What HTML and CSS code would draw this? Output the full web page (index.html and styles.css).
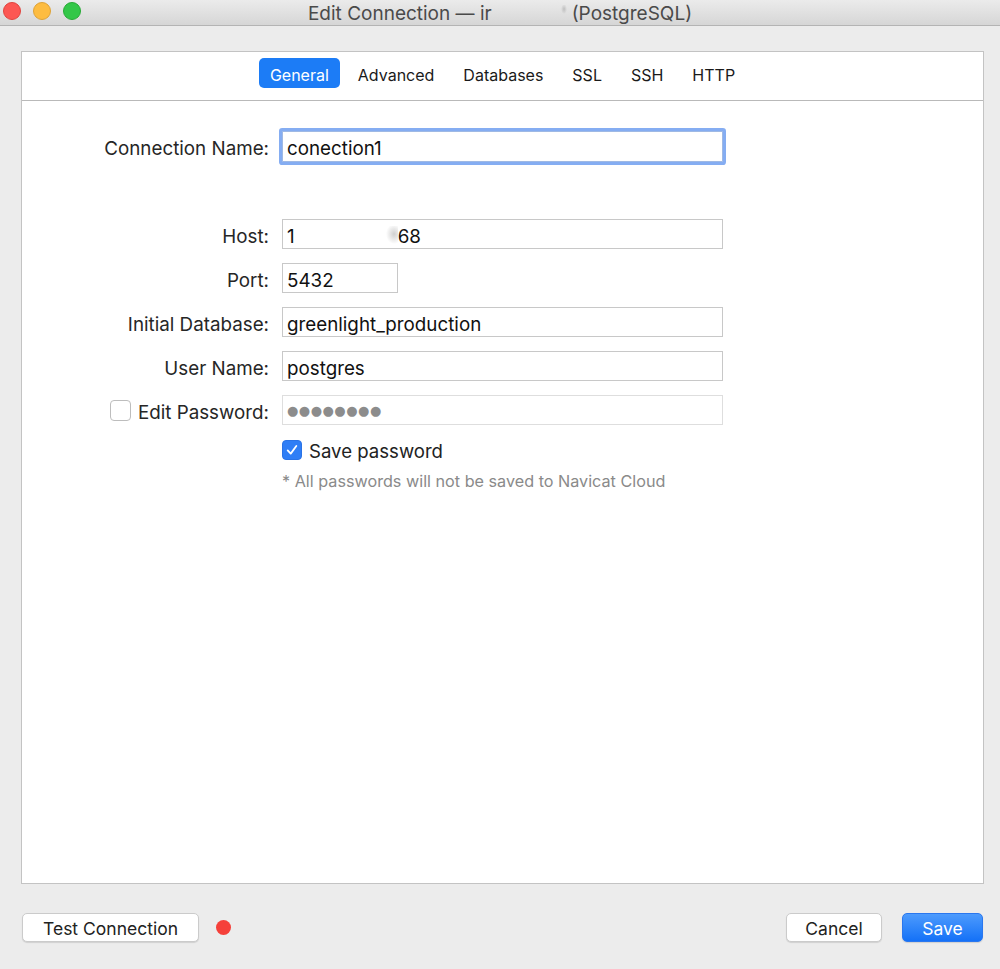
FILE: index.html
```html
<!DOCTYPE html>
<html lang="en">
<head>
<meta charset="utf-8">
<title>Edit Connection</title>
<link rel="stylesheet" href="styles.css">
</head>
<body>
<div class="window">
  <header class="titlebar">
    <div class="lights">
      <span class="light red"></span>
      <span class="light yellow"></span>
      <span class="light green"></span>
    </div>
    <div class="title">Edit Connection — ir<span class="redact-title"></span>(PostgreSQL)</div>
    <div></div>
  </header>

  <main class="content">
    <section class="panel">
      <nav class="tabs">
        <span class="tab active">General</span>
        <span class="tab">Advanced</span>
        <span class="tab">Databases</span>
        <span class="tab">SSL</span>
        <span class="tab">SSH</span>
        <span class="tab">HTTP</span>
      </nav>

      <div class="form">
        <div class="row row-name">
          <label class="label">Connection Name:</label>
          <div class="field focused">conection1</div>
        </div>

        <div class="row row-host">
          <label class="label">Host:</label>
          <div class="field">1<span class="redact-host"></span>68</div>
        </div>

        <div class="row">
          <label class="label">Port:</label>
          <div class="field port">5432</div>
        </div>

        <div class="row">
          <label class="label">Initial Database:</label>
          <div class="field">greenlight_production</div>
        </div>

        <div class="row">
          <label class="label">User Name:</label>
          <div class="field">postgres</div>
        </div>

        <div class="row">
          <label class="label label-check"><span class="checkbox"></span><span class="label-text">Edit Password:</span></label>
          <div class="field disabled"><span class="dots">●●●●●●●●</span></div>
        </div>

        <div class="row row-save">
          <span class="label"></span>
          <div class="check-line">
            <span class="checkbox checked">
              <svg viewBox="0 0 20 20" width="20" height="20"><path d="M5.2 10.4 L8.6 14 L14.8 5.6" fill="none" stroke="#fff" stroke-width="2" stroke-linecap="round" stroke-linejoin="round"/></svg>
            </span>
            <span class="check-text">Save password</span>
          </div>
        </div>

        <div class="row row-note">
          <span class="label"></span>
          <p class="note">* All passwords will not be saved to Navicat Cloud</p>
        </div>
      </div>
    </section>

    <footer class="footer">
      <div class="footer-left">
        <button class="btn">Test Connection</button>
        <span class="status-dot"></span>
      </div>
      <div class="footer-right">
        <button class="btn btn-cancel">Cancel</button>
        <button class="btn primary">Save</button>
      </div>
    </footer>
  </main>
</div>
</body>
</html>
```

FILE: styles.css
```css
* { box-sizing: border-box; }

html, body {
  margin: 0;
  padding: 0;
}

body {
  width: 1000px;
  height: 969px;
  background: #ececec;
  font-family: Inter, "Liberation Sans", Arial, sans-serif;
  color: #222;
  overflow: hidden;
}

.window {
  width: 1000px;
  height: 969px;
  display: flex;
  flex-direction: column;
}

.titlebar {
  height: 26px;
  flex: none;
  display: grid;
  grid-template-columns: 1fr auto 1fr;
  align-items: center;
  background: linear-gradient(#ebebeb, #d6d6d6);
  border-bottom: 1px solid #b4b4b4;
}

.lights {
  display: flex;
  gap: 12px;
  padding-left: 3px;
  align-self: start;
  padding-top: 2px;
}

.light {
  width: 18px;
  height: 18px;
  border-radius: 50%;
  display: block;
}
.light.red { background: #fc5753; border: 1px solid #e0443e; }
.light.yellow { background: #fdbc40; border: 1px solid #dea236; }
.light.green { background: #33c748; border: 1px solid #27aa35; }

.title {
  font-size: 19px;
  color: #4a4a4a;
  white-space: nowrap;
  display: flex;
  align-items: center;
  padding-top: 1px;
}

.redact-title {
  display: inline-block;
  width: 80px;
  height: 16px;
  background: radial-gradient(ellipse 3px 5px at 72px 4px, rgba(120,120,120,0.35), transparent);
}

.content {
  flex: 1;
  display: flex;
  flex-direction: column;
  padding: 25px 16px 0 21px;
}

.panel {
  height: 833px;
  background: #fff;
  border: 1px solid #c3c3c3;
  display: flex;
  flex-direction: column;
}

.tabs {
  height: 49px;
  border-bottom: 1px solid #b9b9b9;
  display: flex;
  justify-content: center;
  align-items: flex-start;
  gap: 7px;
  padding-top: 6px;
}

.tab {
  height: 30px;
  padding: 3px 11px 0;
  border-radius: 5px;
  font-size: 16px;
  color: #1a1a1a;
  display: flex;
  align-items: center;
}

.tab.active {
  background: #1c7cf6;
  color: #fff;
}

.form {
  display: flex;
  flex-direction: column;
  padding-top: 30px;
}

.row {
  display: flex;
  align-items: center;
  gap: 13px;
  margin-bottom: 14px;
}

.label {
  width: 247px;
  flex: none;
  text-align: right;
  font-size: 18.8px;
  color: #262626;
  padding-top: 4px;
}

.label-check {
  display: flex;
  align-items: center;
  justify-content: flex-end;
  gap: 7px;
}

.label-check .checkbox { margin-top: -4px; }

.field {
  width: 441px;
  height: 30px;
  border: 1px solid #c8c8c8;
  background: #fff;
  font-size: 18.8px;
  color: #111;
  padding: 4px 4px 0;
  display: flex;
  align-items: center;
  white-space: nowrap;
}

.field.focused {
  height: 31px;
  border-color: #9fb9e4;
  border-radius: 1px;
  box-shadow: 0 0 0 3px #85adf2;
}

.row-name { margin-bottom: 57px; }

.field.port { width: 116px; }

.field.disabled {
  border-color: #dedede;
  padding-top: 0;
}

.dots {
  font-family: "DejaVu Sans", sans-serif;
  font-size: 13px;
  color: #8c8c8c;
  letter-spacing: 0.5px;
}

.redact-host {
  display: inline-block;
  width: 103px;
  height: 20px;
  background: radial-gradient(ellipse 8px 10px at 99px 8px, rgba(150,150,150,0.45), transparent);
}

.checkbox {
  width: 21px;
  height: 21px;
  border: 1px solid #bdbdbd;
  border-radius: 4px;
  background: #fff;
  display: inline-flex;
  align-items: center;
  justify-content: center;
  flex: none;
}

.checkbox.checked {
  width: 20px;
  height: 20px;
  background: #2f7ef6;
  border-color: #2a73e6;
}

.row-save {
  margin-top: -2px;
  margin-bottom: 0;
}

.check-line {
  display: flex;
  align-items: center;
  gap: 7px;
}

.check-text {
  font-size: 18.6px;
  color: #222;
  padding-top: 3px;
}

.row-note { margin-top: 7px; }

.note {
  margin: 0;
  font-size: 16.2px;
  color: #8a8a8a;
  padding-top: 2px;
}

.footer {
  margin-top: 29px;
  display: flex;
  justify-content: space-between;
  align-items: center;
  padding-right: 1px;
}

.footer-left, .footer-right {
  display: flex;
  align-items: center;
}

.footer-left { gap: 17px; padding-left: 1px; }
.footer-right { gap: 20px; }

.btn {
  height: 29px;
  padding: 2px 20px 0;
  font-family: Inter, "Liberation Sans", Arial, sans-serif;
  font-size: 17.5px;
  color: #222;
  background: #fff;
  border: 1px solid #cbcbcb;
  border-radius: 5px;
  box-shadow: 0 1px 1px rgba(0,0,0,0.12);
}

.btn.btn-cancel { width: 96px; padding: 2px 0 0; }

.btn.primary {
  width: 81px;
  padding: 2px 0 0;
  color: #fff;
  background: linear-gradient(#4d9bfd, #1471f7);
  border-color: #2a77ef;
}

.status-dot {
  width: 15px;
  height: 15px;
  border-radius: 50%;
  background: #f5403a;
  display: block;
}
```
